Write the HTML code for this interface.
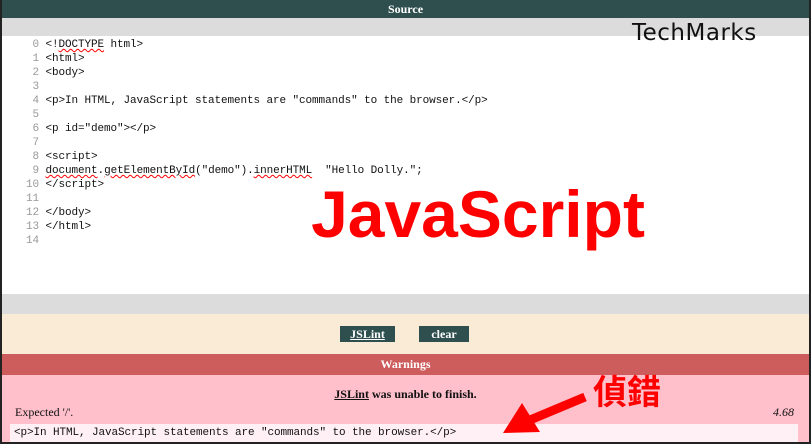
<!DOCTYPE html>
<html><head><meta charset="utf-8"><style>
body{margin:0;width:811px;height:446px;overflow:hidden;background:#fff;position:relative;font-family:"Liberation Serif",serif}
.frame{position:absolute;left:0;top:0;width:807px;height:442px;border:2px solid #222;border-top:0;}
.a{position:absolute}
.code{font-family:"Liberation Mono",monospace;font-size:11px;line-height:14px;color:#111;white-space:pre;letter-spacing:-0.1px}
.ln{color:#999}
.u{text-decoration:underline wavy red;text-decoration-thickness:1px}
</style></head><body>
<div class="a" style="left:0;top:0;width:811px;height:18px;background:#2f4f4f;color:#fff;font-weight:bold;font-size:12px;text-align:center;line-height:18px">Source</div>
<div class="a" style="left:2px;top:18px;width:807px;height:18px;background:#dcdcdc"></div>
<div class="a" style="left:632px;top:20px;font-family:'DejaVu Sans',sans-serif;font-size:23px;color:#111;letter-spacing:0.5px">TechMarks</div>
<div class="a code" style="left:26px;top:38px"><span class="ln"> 0</span> &lt;!<span class="u">DOCTYPE</span> html&gt;
<span class="ln"> 1</span> &lt;html&gt;
<span class="ln"> 2</span> &lt;body&gt;
<span class="ln"> 3</span>
<span class="ln"> 4</span> &lt;p&gt;In HTML, JavaScript statements are "commands" to the browser.&lt;/p&gt;
<span class="ln"> 5</span>
<span class="ln"> 6</span> &lt;p id="demo"&gt;&lt;/p&gt;
<span class="ln"> 7</span>
<span class="ln"> 8</span> &lt;script&gt;
<span class="ln"> 9</span> <span class="u">document</span>.<span class="u">getElementById</span>("demo").<span class="u">innerHTML</span>  "Hello Dolly.";
<span class="ln">10</span> &lt;/script&gt;
<span class="ln">11</span>
<span class="ln">12</span> &lt;/body&gt;
<span class="ln">13</span> &lt;/html&gt;
<span class="ln">14</span></div>
<div class="a" style="left:290px;top:174px;width:376px;text-align:center;font-family:'Liberation Sans',sans-serif;font-weight:bold;font-size:66px;color:#f00;line-height:80px">JavaScript</div>
<div class="a" style="left:2px;top:294px;width:807px;height:20px;background:#dcdcdc"></div>
<div class="a" style="left:2px;top:314px;width:807px;height:40px;background:#faebd7"></div>
<div class="a" style="left:340px;top:326px;width:55px;height:16px;background:#2f4f4f;color:#fff;font-weight:bold;font-size:12px;text-align:center;line-height:16px;text-decoration:underline">JSLint</div>
<div class="a" style="left:419px;top:326px;width:50px;height:16px;background:#2f4f4f;color:#fff;font-weight:bold;font-size:12px;text-align:center;line-height:16px">clear</div>
<div class="a" style="left:2px;top:354px;width:807px;height:21px;background:#cd5c5c;color:#fff;font-weight:bold;font-size:12px;text-align:center;line-height:21px">Warnings</div>
<div class="a" style="left:2px;top:375px;width:807px;height:69px;background:#ffc0cb"></div>
<div class="a" style="left:0;top:387px;width:811px;text-align:center;font-size:12px;font-weight:bold;color:#111"><u>JSLint</u> was unable to finish.</div>
<div class="a" style="left:15px;top:405px;font-size:12px;color:#111">Expected '/'.</div>
<div class="a" style="left:773px;top:405px;font-size:12px;font-style:italic;color:#111">4.68</div>
<div class="a code" style="left:10px;top:424px;width:788px;height:18px;background:#fff0f5;line-height:18px;padding-left:4px;box-sizing:border-box">&lt;p&gt;In HTML, JavaScript statements are "commands" to the browser.&lt;/p&gt;</div>
<svg class="a" style="left:0;top:0" width="811" height="446"><line x1="585" y1="397" x2="530" y2="420" stroke="#f00" stroke-width="9"/><polygon points="503,433 522,403 540,432" fill="#f00"/></svg>
<div class="a" style="left:593px;top:368px;font-family:'Noto Sans CJK TC',sans-serif;font-weight:bold;font-size:34px;color:#f00;line-height:44px">偵錯</div>
<div class="frame"></div>
</body></html>
